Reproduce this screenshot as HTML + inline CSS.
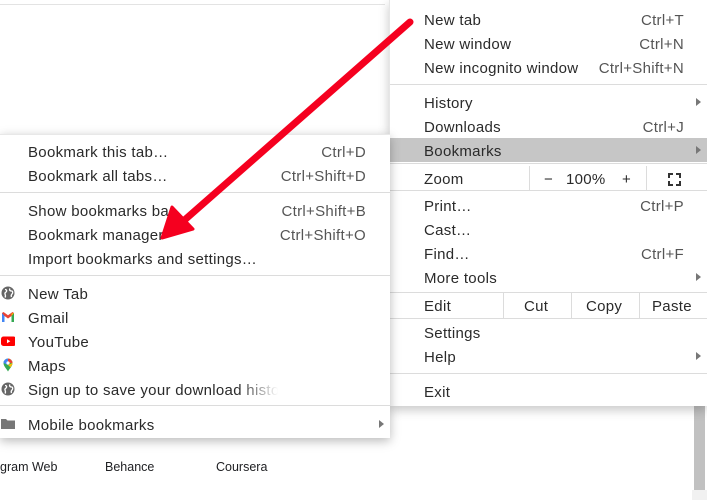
<!DOCTYPE html>
<html><head><meta charset="utf-8"><style>
*{margin:0;padding:0;box-sizing:border-box}
body{width:707px;height:500px;overflow:hidden;background:#fff;position:relative;font-family:"Liberation Sans",sans-serif;color:#2a2a2a;font-size:15px;letter-spacing:.3px}
.topline{position:absolute;left:0;top:4px;width:385px;height:1px;background:#e3e3e3}
.menu{position:absolute;background:#fff}
#main{left:389px;top:0;width:318px;height:406px;border-left:1px solid #e6e6e6;box-shadow:0 4px 10px rgba(0,0,0,.22)}
#sub{left:0;top:134px;width:390px;height:304px;box-shadow:0 3px 10px rgba(0,0,0,.28);border-top:1px solid #e8e8e8}
.row{position:absolute;left:0;right:0;height:24px;line-height:24px;white-space:nowrap}
.row span{top:2px}
.row .l{position:absolute;left:34px}
#sub .row .l{left:28px}
.row .r{position:absolute;right:23px;color:#555}
#sub .row .r{right:24px}
.row span.tri{top:8px}
.sep{position:absolute;left:0;right:0;height:1px;background:#dcdcdc}
.tri{position:absolute;right:6px;top:8px;width:0;height:0;border-left:5px solid #777;border-top:4px solid transparent;border-bottom:4px solid transparent}
.vd{position:absolute;top:0;width:1px;height:100%;background:#dcdcdc}
.ic{position:absolute;left:1px;top:5px;width:14px;height:14px}
.bt{position:absolute;top:460px;font-size:12.5px;letter-spacing:0;color:#202124}
</style></head><body>
<div class="topline"></div>
<div class="bt" style="left:0">gram Web</div>
<div class="bt" style="left:105px">Behance</div>
<div class="bt" style="left:216px">Coursera</div>
<div style="position:absolute;left:694px;top:406px;width:11px;height:84px;background:#c1c1c1"></div>
<div style="position:absolute;left:692px;top:490px;width:15px;height:10px;background:#f1f1f1"></div>

<div class="menu" id="main">
<div class="row" style="top:7px"><span class="l">New tab</span><span class="r">Ctrl+T</span></div>
<div class="row" style="top:31px"><span class="l">New window</span><span class="r">Ctrl+N</span></div>
<div class="row" style="top:55px"><span class="l">New incognito window</span><span class="r">Ctrl+Shift+N</span></div>
<div class="sep" style="top:84px"></div>
<div class="row" style="top:90px"><span class="l">History</span><span class="tri"></span></div>
<div class="row" style="top:114px"><span class="l">Downloads</span><span class="r">Ctrl+J</span></div>
<div class="row" style="top:138px;background:#c6c6c6"><span class="l">Bookmarks</span><span class="tri"></span></div>
<div class="sep" style="top:163px"></div>
<div class="row" style="top:166px"><span class="l">Zoom</span>
 <div class="vd" style="left:139px"></div>
 <span style="position:absolute;left:154px">−</span>
 <span style="position:absolute;left:176px">100%</span>
 <span style="position:absolute;left:232px">+</span>
 <div class="vd" style="left:256px"></div>
 <svg style="position:absolute;left:278px;top:7px" width="13" height="13" viewBox="0 0 13 13" fill="none" stroke="#333" stroke-width="2"><path d="M1 5V1h4M8 1h4v4M12 8v4H8M5 12H1V8"/></svg>
</div>
<div class="sep" style="top:190px"></div>
<div class="row" style="top:193px"><span class="l">Print…</span><span class="r">Ctrl+P</span></div>
<div class="row" style="top:217px"><span class="l">Cast…</span></div>
<div class="row" style="top:241px"><span class="l">Find…</span><span class="r">Ctrl+F</span></div>
<div class="row" style="top:265px"><span class="l">More tools</span><span class="tri"></span></div>
<div class="sep" style="top:292px"></div>
<div class="row" style="top:293px;height:25px"><span class="l">Edit</span>
 <div class="vd" style="left:113px"></div><span style="position:absolute;left:134px">Cut</span>
 <div class="vd" style="left:181px"></div><span style="position:absolute;left:196px">Copy</span>
 <div class="vd" style="left:249px"></div><span style="position:absolute;left:262px">Paste</span>
</div>
<div class="sep" style="top:318px"></div>
<div class="row" style="top:320px"><span class="l">Settings</span></div>
<div class="row" style="top:344px"><span class="l">Help</span><span class="tri"></span></div>
<div class="sep" style="top:373px"></div>
<div class="row" style="top:379px"><span class="l">Exit</span></div>
</div>

<div class="menu" id="sub">
<div class="row" style="top:4px"><span class="l">Bookmark this tab…</span><span class="r">Ctrl+D</span></div>
<div class="row" style="top:28px"><span class="l">Bookmark all tabs…</span><span class="r">Ctrl+Shift+D</span></div>
<div class="sep" style="top:57px"></div>
<div class="row" style="top:63px"><span class="l">Show bookmarks bar</span><span class="r">Ctrl+Shift+B</span></div>
<div class="row" style="top:87px"><span class="l">Bookmark manager</span><span class="r">Ctrl+Shift+O</span></div>
<div class="row" style="top:111px"><span class="l">Import bookmarks and settings…</span></div>
<div class="sep" style="top:140px"></div>
<div class="row" style="top:146px"><svg class="ic" viewBox="0 0 14 14"><circle cx="7" cy="7" r="6.5" fill="#666"/><path d="M4 3.5c1.5 0 2 1 1.5 2s-2 1-1.5 2.5 1 2 0 3.5M9 2.5c-1 1.5 0 2.5 1.5 2.5s1.5 2 .5 3-1 2-.5 3" stroke="#fff" stroke-width="1.3" fill="none"/></svg><span class="l">New Tab</span></div>
<div class="row" style="top:170px"><svg class="ic" viewBox="0 0 14 14"><path d="M1 3v9h2.5V6L7 8.5 10.5 6v6H13V3l-1.5-1L7 5.3 2.5 2z" fill="#ea4335"/><path d="M1 3v9h2.5V6z" fill="#4285f4"/><path d="M13 3v9h-2.5V6z" fill="#34a853"/><path d="M13 3l-2.5 3V3.5z" fill="#fbbc04"/></svg><span class="l">Gmail</span></div>
<div class="row" style="top:194px"><svg class="ic" viewBox="0 0 14 14"><rect x="0" y="2.5" width="15" height="9.5" rx="2.5" fill="#f00"/><path d="M6 5.2v4l3.3-2z" fill="#fff"/></svg><span class="l">YouTube</span></div>
<div class="row" style="top:218px"><svg class="ic" viewBox="0 0 14 14"><path d="M7 13.5C5 10 2.5 8 2.5 5a4.5 4.5 0 0 1 9 0c0 3-2.5 5-4.5 8.5z" fill="#34a853"/><path d="M2.5 5a4.5 4.5 0 0 1 4.5-4.5V7z" fill="#4285f4"/><path d="M7 .5A4.5 4.5 0 0 1 11.5 5H7z" fill="#ea4335"/><path d="M11.5 5c0 1.5-1 3-2 4.3L7 7z" fill="#fbbc04"/><circle cx="7" cy="5" r="1.6" fill="#fff"/></svg><span class="l">Maps</span></div>
<div class="row" style="top:242px"><svg class="ic" viewBox="0 0 14 14"><circle cx="7" cy="7" r="6.5" fill="#666"/><path d="M4 3.5c1.5 0 2 1 1.5 2s-2 1-1.5 2.5 1 2 0 3.5M9 2.5c-1 1.5 0 2.5 1.5 2.5s1.5 2 .5 3-1 2-.5 3" stroke="#fff" stroke-width="1.3" fill="none"/></svg><span class="l" style="width:250px;overflow:hidden;-webkit-mask-image:linear-gradient(90deg,#000 84%,transparent);mask-image:linear-gradient(90deg,#000 84%,transparent)">Sign up to save your download history</span></div>
<div class="sep" style="top:270px"></div>
<div class="row" style="top:277px"><svg class="ic" viewBox="0 0 14 14"><path d="M0 2h5l1.5 1.5H14V12H0z" fill="#777"/></svg><span class="l">Mobile bookmarks</span><span class="tri"></span></div>
</div>

<svg style="position:absolute;left:0;top:0" width="707" height="500">
<path d="M410 22 L180 224" stroke="#f5001f" stroke-width="7" stroke-linecap="round"/>
<path d="M162 238 L172 207 L193 229 Z" fill="#f5001f" stroke="#f5001f" stroke-width="3" stroke-linejoin="round"/>
</svg>
</body></html>
